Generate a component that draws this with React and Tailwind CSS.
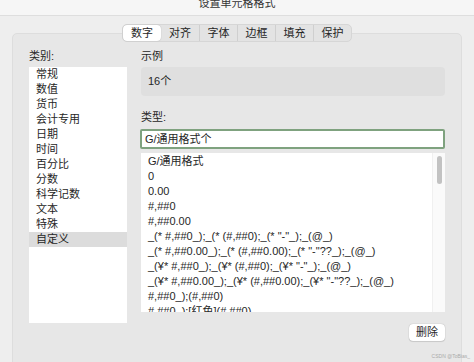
const categories = [
  "常规",
  "数值",
  "货币",
  "会计专用",
  "日期",
  "时间",
  "百分比",
  "分数",
  "科学记数",
  "文本",
  "特殊",
  "自定义",
];

const formats = [
  "G/通用格式",
  "0",
  "0.00",
  "#,##0",
  "#,##0.00",
  '_(* #,##0_);_(* (#,##0);_(* "-"_);_(@_)',
  '_(* #,##0.00_);_(* (#,##0.00);_(* "-"??_);_(@_)',
  '_(¥* #,##0_);_(¥* (#,##0);_(¥* "-"_);_(@_)',
  '_(¥* #,##0.00_);_(¥* (#,##0.00);_(¥* "-"??_);_(@_)',
  "#,##0_);(#,##0)",
  "#,##0_);[红色](#,##0)",
];

const tabs = ["数字", "对齐", "字体", "边框", "填充", "保护"];

const App = () => {
  return (
    <div
      className="w-[474px] h-[362px] overflow-hidden bg-[#eeeeee] text-[#262626] relative"
      style={{ fontFamily: '"Liberation Sans", "Noto Sans CJK SC", sans-serif' }}
    >
      <div className="h-[16px] bg-[#f6f6f6] border-b border-[#dedede] flex justify-center">
        <span className="text-[11px] leading-[11px] -mt-[2px] text-[#333]">
          设置单元格格式
        </span>
      </div>
      <div className="px-[12px] pt-[8px]">
        <div className="flex justify-center relative z-10">
          <div className="flex h-[18px] bg-[#e3e3e3] rounded-[5px] border border-[#d6d6d6] text-[11px] leading-[16px]">
            {tabs.map((t, i) => (
              <div
                key={t}
                className={
                  i === 0
                    ? "w-[38px] text-center bg-white rounded-[4px] shadow-[0_0_1px_rgba(0,0,0,0.3)]"
                    : "w-[38px] text-center border-l border-[#cfcfcf] first:border-l-0 [&:nth-child(2)]:border-l-0"
                }
              >
                {t}
              </div>
            ))}
          </div>
        </div>
        <div className="-mt-[9px] h-[340px] bg-[#e7e7e7] border border-[#dddddd] rounded-[5px] pl-[16px] pt-[15px] flex gap-[14px]">
          <div className="w-[98px] flex flex-col">
            <div className="h-[18px] text-[11px] leading-[14px]">类别:</div>
            <div className="h-[256px] bg-white text-[11px] leading-[15px] pt-[0px]">
              {categories.map((c) => (
                <div
                  key={c}
                  className={
                    c === "自定义"
                      ? "pl-[7px] bg-[#dcdcdc]"
                      : "pl-[7px]"
                  }
                >
                  {c}
                </div>
              ))}
            </div>
          </div>
          <div className="w-[304px] flex flex-col">
            <div className="h-[18px] text-[11px] leading-[14px]">示例</div>
            <div className="h-[29px] bg-[#dfdfdf] rounded-[4px] text-[11px] leading-[29px] pl-[7px]">
              16个
            </div>
            <div className="mt-[14px] h-[19px] text-[11px] leading-[14px]">类型:</div>
            <div className="h-[20px] -ml-[1px] w-[305px] border-2 border-[#7fa27f] rounded-[2px] bg-white text-[11px] leading-[16px] pl-[3px]">
              G/通用格式个
            </div>
            <div className="mt-[4px] h-[159px] bg-white flex overflow-hidden">
              <div className="flex-1 pl-[7px] pt-[1px] text-[11px] leading-[15px] whitespace-nowrap">
                {formats.map((f) => (
                  <div key={f}>{f}</div>
                ))}
              </div>
              <div className="w-[13px] bg-[#fafafa] border-l border-[#f0f0f0] flex justify-center pt-[3px]">
                <div className="w-[5px] h-[28px] rounded-full bg-[#c2c2c2]" />
              </div>
            </div>
            <div className="flex justify-end mt-[12px]">
              <div className="w-[36px] h-[17px] bg-white rounded-[4px] shadow-[0_0_1px_rgba(0,0,0,0.35),0_1px_1px_rgba(0,0,0,0.1)] text-[11px] leading-[17px] text-center">
                删除
              </div>
            </div>
          </div>
        </div>
      </div>
      <div className="absolute right-[4px] bottom-[3px] text-[5px] leading-[5px] text-[#aaaaaa]">
        CSDN @ToBias_
      </div>
    </div>
  );
};

export default App;
